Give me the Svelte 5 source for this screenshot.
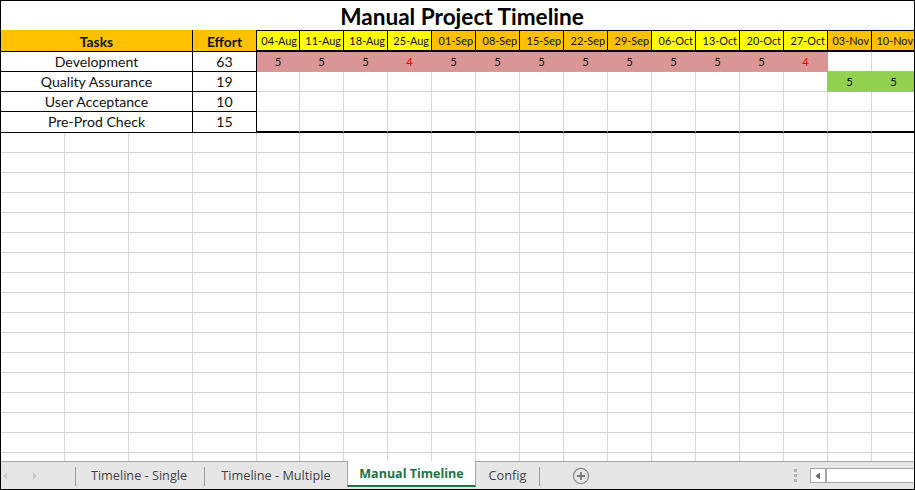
<script>
  // Excel-style sheet: timeline table on top of an empty grid, tab strip at the bottom.
  const dates = [
    ['04-Aug', 'y'], ['11-Aug', 'y'], ['18-Aug', 'y'], ['25-Aug', 'y'],
    ['01-Sep', 'o'], ['08-Sep', 'o'], ['15-Sep', 'o'], ['22-Sep', 'o'], ['29-Sep', 'o'],
    ['06-Oct', 'y'], ['13-Oct', 'y'], ['20-Oct', 'y'], ['27-Oct', 'y'],
    ['03-Nov', 'o'], ['10-Nov', 'o']
  ];
  const dev = [5, 5, 5, 4, 5, 5, 5, 5, 5, 5, 5, 5, 4, null, null];
  const qa = [null, null, null, null, null, null, null, null, null, null, null, null, null, 5, 5];
  const empty = new Array(15).fill(null);
  const rows = [
    { task: 'Development', effort: 63, cells: dev, tone: 'dev' },
    { task: 'Quality Assurance', effort: 19, cells: qa, tone: 'qa' },
    { task: 'User Acceptance', effort: 10, cells: empty, tone: '' },
    { task: 'Pre-Prod Check', effort: 15, cells: empty, tone: '' }
  ];
  const blank = new Array(17 * 19).fill(0);
</script>

<div class="sheet">
  <h1 class="title">Manual Project Timeline</h1>

  <div class="table">
    <div class="hd">Tasks</div>
    <div class="hd">Effort</div>
    {#each dates as [label, tone]}
      <div class="date {tone}">{label}</div>
    {/each}

    {#each rows as row, r}
      <div class="label" class:last={r === 3}>{row.task}</div>
      <div class="label" class:last={r === 3}>{row.effort}</div>
      {#each row.cells as v}
        <div class="cell {v !== null ? row.tone : ''}" class:last={r === 3} class:low={v === 4}>{v ?? ''}</div>
      {/each}
    {/each}
  </div>

  <div class="blank">
    {#each blank as _}<div></div>{/each}
  </div>

  <div class="tabs">
    <div class="nav">
      <svg width="10" height="10" viewBox="0 0 10 10"><path d="M6 1.5v7L2 5z" fill="#c8c8c8" /></svg>
      <svg width="10" height="10" viewBox="0 0 10 10"><path d="M3 1.5v7L7 5z" fill="#c8c8c8" /></svg>
    </div>
    <span class="sep"></span>
    <div class="tab single">Timeline - Single</div>
    <span class="sep"></span>
    <div class="tab multi">Timeline - Multiple</div>
    <div class="tab active">Manual Timeline</div>
    <div class="tab config">Config</div>
    <span class="sep"></span>
    <svg class="add" width="18" height="18" viewBox="0 0 18 18">
      <circle cx="9" cy="9" r="7.6" fill="none" stroke="#8c8c8c" stroke-width="1.3" />
      <path d="M9 5v8M5 9h8" stroke="#7a7a7a" stroke-width="1.8" />
    </svg>
    <div class="dots"><i></i><i></i><i></i></div>
    <div class="scroll">
      <div class="arrow">
        <svg width="8" height="10" viewBox="0 0 8 10"><path d="M6 1.5v7L1.5 5z" fill="#666" /></svg>
      </div>
    </div>
  </div>
</div>

<style>
  :global(body) { margin: 0; }
  .sheet {
    width: 915px;
    height: 490px;
    box-sizing: border-box;
    border: 1px solid #000;
    display: flex;
    flex-direction: column;
    overflow: hidden;
    background: #fff;
    font-family: Lato, "Liberation Sans", sans-serif;
    color: #111;
  }
  .title {
    margin: 0;
    height: 29px;
    padding-left: 9px;
    line-height: 31px;
    text-align: center;
    font-size: 22.6px;
    font-weight: 700;
    color: #000;
  }
  .table {
    display: grid;
    grid-template-columns: 192px 64px 43px repeat(14, 44px);
    grid-template-rows: 22px 20px 20px 20px 21px;
    flex: none;
  }
  .table > div { box-sizing: border-box; text-align: center; white-space: nowrap; overflow: hidden; }
  .hd {
    background: #ffc000;
    border-right: 1px solid #000;
    border-bottom: 1px solid #000;
    font-weight: 700;
    font-size: 13.8px;
    line-height: 23px;
  }
  .date {
    border-top: 1px solid #000;
    border-right: 1px solid #000;
    border-bottom: 2px solid #000;
    font-size: 10.9px;
    line-height: 20px;
    text-align: right !important;
    padding-right: 2px;
  }
  .date.y { background: #ffff00; }
  .date.o { background: #ffc000; }
  .label {
    border-right: 1px solid #000;
    border-bottom: 1px solid #000;
    font-size: 14.1px;
    line-height: 20px;
  }
  .cell {
    border-right: 1px solid #d4d4d4;
    border-bottom: 1px solid #d4d4d4;
    font-size: 11.3px;
    line-height: 20px;
  }
  .cell.last { border-bottom: 2px solid #000; }
  .cell.dev { background: #da9694; border-color: #da9694; }
  .cell.low { color: #ff0000; }
  .cell.qa { background: #92d050; border-color: #92d050; box-shadow: -1px -1px 0 #92d050; }
  .blank {
    flex: 1;
    min-height: 0;
    overflow: hidden;
    display: grid;
    grid-template-columns: repeat(4, 64px) 43px repeat(14, 44px);
    grid-auto-rows: 20px;
  }
  .blank > div { border-right: 1px solid #d4d4d4; border-bottom: 1px solid #d4d4d4; box-sizing: border-box; }
  .tabs {
    flex: none;
    height: 28px;
    box-sizing: border-box;
    border-top: 1px solid #a6a6a6;
    background: #e6e6e6;
    display: flex;
    align-items: center;
    font-family: "Open Sans", "Liberation Sans", sans-serif;
    font-size: 12.7px;
    color: #444;
  }
  .nav { width: 74px; display: flex; gap: 19px; align-items: center; flex: none; }
  .sep { width: 1px; height: 19px; background: #9a9a9a; flex: none; margin-top: 1px; }
  .tab { text-align: center; flex: none; white-space: nowrap; padding-bottom: 2px; box-sizing: border-box; }
  .single { width: 128px; padding-right: 2px; }
  .multi { width: 142px; }
  .active {
    width: 129px;
    height: 26px;
    margin-top: -1px;
    padding-bottom: 0;
    align-self: flex-start;
    background: #fff;
    border-left: 1px solid #a6a6a6;
    border-right: 1px solid #a6a6a6;
    border-bottom: 2px solid #217346;
    color: #217346;
    font-weight: 700;
    font-size: 12.5px;
    line-height: 25px;
  }
  .config { width: 63px; }
  .add { margin-left: 32px; flex: none; }
  .dots { margin-left: 204px; width: 3px; display: flex; flex-direction: column; gap: 2px; flex: none; }
  .dots i { display: block; width: 3px; height: 3px; background: #b4b4b4; }
  .scroll {
    margin-left: 13px;
    flex: 1;
    height: 15px;
    box-sizing: border-box;
    background: #fff;
    border: 1px solid #a6a6a6;
    border-right: 0;
  }
  .arrow { width: 14px; height: 13px; border-right: 2px solid #a6a6a6; display: flex; align-items: center; justify-content: center; }
</style>
